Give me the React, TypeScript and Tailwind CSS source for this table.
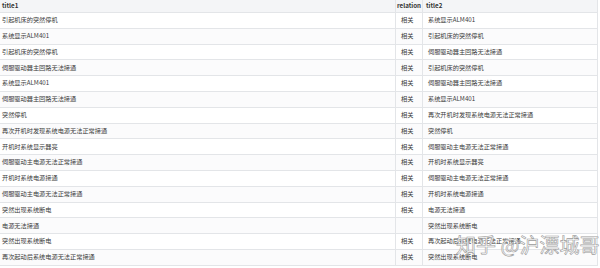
import React from "react";

const rows: [string, string, string][] = [
  ["引起机床的突然停机", "相关", "系统显示ALM401"],
  ["系统显示ALM401", "相关", "引起机床的突然停机"],
  ["引起机床的突然停机", "相关", "伺服驱动器主回路无法接通"],
  ["伺服驱动器主回路无法接通", "相关", "引起机床的突然停机"],
  ["系统显示ALM401", "相关", "伺服驱动器主回路无法接通"],
  ["伺服驱动器主回路无法接通", "相关", "系统显示ALM401"],
  ["突然停机", "相关", "再次开机时发现系统电源无法正常接通"],
  ["再次开机时发现系统电源无法正常接通", "相关", "突然停机"],
  ["开机时系统显示器亮", "相关", "伺服驱动主电源无法正常接通"],
  ["伺服驱动主电源无法正常接通", "相关", "开机时系统显示器亮"],
  ["开机时系统电源接通", "相关", "伺服驱动主电源无法正常接通"],
  ["伺服驱动主电源无法正常接通", "相关", "开机时系统电源接通"],
  ["突然出现系统断电", "相关", "电源无法接通"],
  ["电源无法接通", "", "突然出现系统断电"],
  ["突然出现系统断电", "相关", "再次起动后系统电源无法正常接通"],
  ["再次起动后系统电源无法正常接通", "相关", "突然出现系统断电"],
];

export default function App() {
  return (
    <div
      className="relative w-[600px] h-[268px] overflow-hidden bg-white text-[#3a3a3a] text-[6.2px] leading-none"
      style={{ fontFamily: '"Noto Sans CJK SC", "Liberation Sans", sans-serif' }}
    >
      <div className="w-[598px] border-r border-[#e3e5e8]">
        <div className="flex h-[13px] items-center bg-[#f4f5f7] border-b border-[#e3e5e8] font-bold text-[#333]">
          <div className="w-[396px] pl-[2px] border-r border-[#e3e5e8] h-full flex items-center">title1</div>
          <div className="w-[27px] pl-[1px] border-r border-[#e3e5e8] h-full flex items-center">relation</div>
          <div className="flex-1 pl-[3px] h-full flex items-center">title2</div>
        </div>
        {rows.map((r, i) => (
          <div
            key={i}
            className={`flex h-[15.8px] items-center border-b border-[#e3e5e8] ${i % 2 === 1 ? "bg-[#fbfbfc]" : "bg-white"}`}
          >
            <div className="w-[396px] pl-[2px] border-r border-[#e3e5e8] h-full flex items-center">{r[0]}</div>
            <div className="w-[27px] pl-[5px] border-r border-[#e3e5e8] h-full flex items-center">{r[1]}</div>
            <div className="flex-1 pl-[5px] h-full flex items-center">{r[2]}</div>
          </div>
        ))}
      </div>
      <div
        className="absolute left-[456px] top-[235px] whitespace-nowrap text-[20px] leading-none text-white [-webkit-text-stroke:0.6px_#9a9a9a]"
        style={{ fontFamily: '"Noto Sans CJK SC", sans-serif' }}
      >
        知乎 @沪漂城哥
      </div>
    </div>
  );
}
